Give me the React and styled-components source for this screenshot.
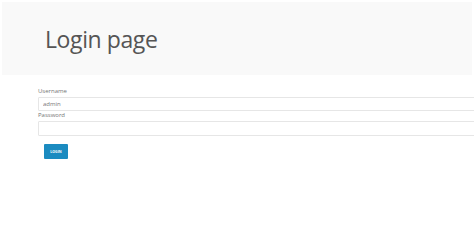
import React from "react";
import styled, { createGlobalStyle } from "styled-components";

const GlobalStyle = createGlobalStyle`
  body {
    margin: 0;
    background: #fff;
    font-family: "Open Sans", "Liberation Sans", sans-serif;
    color: #555;
  }
`;

const Page = styled.div`
  width: 474px;
  height: 248px;
  overflow: hidden;
  padding: 2px 0 0 2px;
  box-sizing: border-box;
`;

const Jumbotron = styled.div`
  width: 470px;
  height: 73px;
  background: #f9f9f9;
  display: flex;
  align-items: center;
  padding-left: 43px;
  box-sizing: border-box;
`;

const Title = styled.h1`
  margin: 0;
  font-size: 23px;
  font-weight: 400;
  color: #555;
  letter-spacing: -0.4px;
`;

const Form = styled.form`
  display: flex;
  flex-direction: column;
  padding: 12px 0 0 36px;
`;

const Label = styled.label`
  font-size: 6px;
  color: #777;
  line-height: 8px;
  margin-bottom: 2px;
`;

const Input = styled.input`
  width: 460px;
  height: ${(p) => p.$h || 14}px;
  box-sizing: border-box;
  border: 1px solid #e6e6e6;
  border-radius: 1px;
  padding: 0 4px;
  font-family: inherit;
  font-size: 6px;
  color: #777;
  margin-bottom: ${(p) => p.$gap || 0}px;
  outline: none;
`;

const Button = styled.button`
  margin-left: 6px;
  width: 24px;
  height: 15px;
  border: none;
  border-radius: 1px;
  background: #1b8bc0;
  color: #fff;
  font-family: inherit;
  font-size: 3.5px;
  font-weight: 700;
  padding: 0;
  cursor: pointer;
`;

export default function App() {
  return (
    <>
      <GlobalStyle />
      <Page>
        <Jumbotron>
          <Title>Login page</Title>
        </Jumbotron>
        <Form onSubmit={(e) => e.preventDefault()}>
          <Label>Username</Label>
          <Input defaultValue="admin" />
          <Label>Password</Label>
          <Input type="password" $h={15} $gap={8} />
          <Button type="submit">LOGIN</Button>
        </Form>
      </Page>
    </>
  );
}
